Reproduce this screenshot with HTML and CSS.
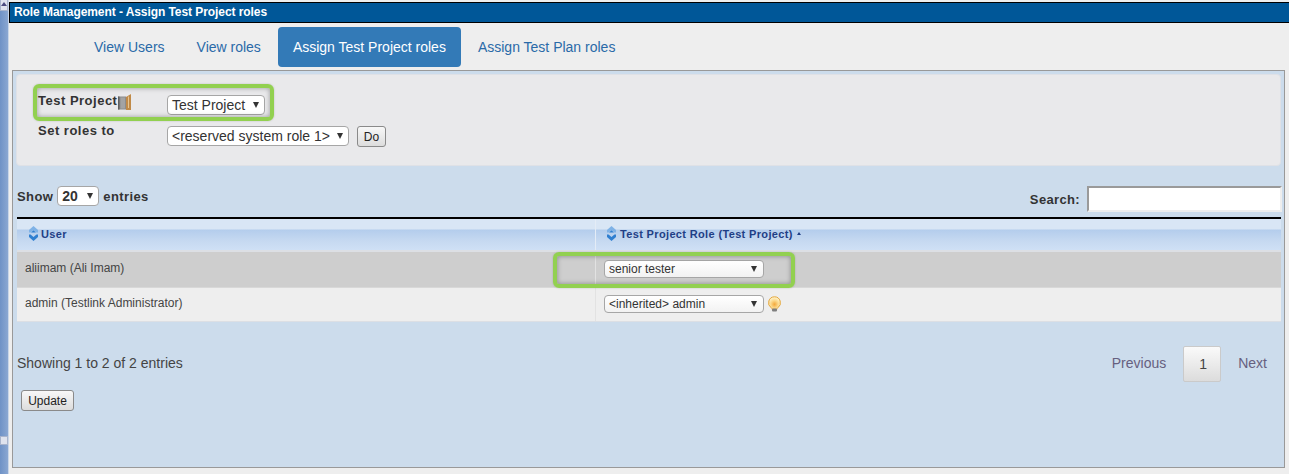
FILE: index.html
```html
<!DOCTYPE html>
<html lang="en">
<head>
<meta charset="utf-8">
<title>Assign Test Project roles</title>
<link rel="stylesheet" href="styles.css">
</head>
<body>
<div class="page">
  <aside class="rail">
    <div class="rail-btn rail-btn-top"><span class="rail-arrow"></span></div>
    <div class="rail-btn rail-btn-grip"></div>
  </aside>
  <main class="main">
    <h1 class="title">Role Management - Assign Test Project roles</h1>
    <nav class="tabs">
      <a class="tab">View Users</a>
      <a class="tab">View roles</a>
      <a class="tab tab-active">Assign Test Project roles</a>
      <a class="tab">Assign Test Plan roles</a>
    </nav>
    <section class="content">
      <div class="panel">
        <div class="form-row form-row-first">
          <span class="form-label">Test Project<svg class="door" width="14" height="16" viewBox="0 0 14 16"><rect x="1" y="2.5" width="8" height="13" fill="#8c8c8c"/><rect x="1" y="2.5" width="1.5" height="13" fill="#5f5f5f"/><rect x="3.5" y="3.5" width="4.5" height="11" fill="#a3a3a3"/><path d="M9 3 14 0v16H9z" fill="#c08a48"/><path d="M11.5 2.5V14" stroke="#e8c48e"/></svg></span>
          <span class="select select-project">Test Project</span>
        </div>
        <div class="form-row form-row-second">
          <span class="form-label form-label-plain">Set roles to</span>
          <span class="select select-role">&lt;reserved system role 1&gt;</span>
          <button class="btn btn-do">Do</button>
        </div>
        <div class="mark mark-project"></div>
      </div>
      <div class="table-tools">
        <div class="length">Show <span class="select select-length">20</span> entries</div>
        <div class="search">Search: <span class="search-input"></span></div>
      </div>
      <div class="table">
        <div class="thead">
          <div class="th th-user"><svg class="sort" width="9" height="15" viewBox="0 0 9 15"><path d="M4.5 0 9 4v2.5H7.5L4.5 4 1.5 6.500H0V4z" fill="#7fb2e6"/><path d="M4.5 15 0 11V8.500h1.500l3 2.500 3-2.500H9V11z" fill="#2f7fd0"/><path d="M4.500 4.200 7 6.500H2z" fill="#2f7fd0"/></svg>User</div>
          <div class="th th-role"><svg class="sort" width="9" height="15" viewBox="0 0 9 15"><path d="M4.5 0 9 4v2.5H7.5L4.5 4 1.5 6.500H0V4z" fill="#7fb2e6"/><path d="M4.5 15 0 11V8.500h1.500l3 2.500 3-2.500H9V11z" fill="#2f7fd0"/><path d="M4.500 4.200 7 6.500H2z" fill="#2f7fd0"/></svg>Test Project Role (Test Project)<span class="caret-up"></span></div>
        </div>
        <div class="tr tr-dark">
          <div class="td td-user">aliimam (Ali Imam)</div>
          <div class="td td-role"><span class="select select-cell">senior tester</span></div>
        </div>
        <div class="tr tr-light">
          <div class="td td-user">admin (Testlink Administrator)</div>
          <div class="td td-role"><span class="select select-cell">&lt;inherited&gt; admin</span><svg class="bulb" width="15" height="16" viewBox="0 0 15 16"><defs><radialGradient id="bulbGlow" cx=".5" cy=".6" r=".55"><stop offset="0" stop-color="#f3a83a"/><stop offset=".55" stop-color="#fbd88a"/><stop offset="1" stop-color="#fff2c8"/></radialGradient></defs><path d="M7.5.8a6 6 0 0 0-3.4 10.900c.7.500.9 1 .9 1.600h5c0-.6.2-1.100.9-1.600A6 6 0 0 0 7.500.8z" fill="url(#bulbGlow)" stroke="#e3a63c"/><rect x="5" y="12.500" width="5" height="3" rx="1" fill="#7f7f7f"/></svg></div>
        </div>
        <div class="mark mark-cell"></div>
      </div>
      <div class="table-foot">
        <div class="info">Showing 1 to 2 of 2 entries</div>
        <div class="pager">
          <span class="page-link">Previous</span>
          <span class="page-current">1</span>
          <span class="page-link">Next</span>
        </div>
      </div>
      <button class="btn btn-update">Update</button>
    </section>
  </main>
</div>
</body>
</html>
```
FILE: styles.css
```css
* { box-sizing: border-box; }
html, body { margin: 0; padding: 0; height: 100%; }
body { font-family: "Liberation Sans", Arial, sans-serif; background: #eeeeee; overflow: hidden; }
.page { display: flex; height: 474px; }

.rail { width: 9px; flex: none; background: linear-gradient(90deg, #6f92c6, #8aa7d2); border-right: 1px solid #c9d6e8; display: flex; flex-direction: column; justify-content: space-between; padding-bottom: 29px; }
.rail-btn { width: 8px; background: #dfe3ee; border: 1px solid #a9b4cc; }
.rail-btn-top { height: 11px; border-top: 0; display: flex; justify-content: center; padding-top: 2px; }
.rail-arrow { width: 0; height: 0; border-left: 3px solid transparent; border-right: 3px solid transparent; border-bottom: 4px solid #4b4b80; }
.rail-btn-grip { height: 9px; }

.main { flex: 1; min-width: 0; padding-top: 2px; }
.title { margin: 0; height: 21px; padding: 0 0 0 4px; background: #005798; border: 1px solid #000; border-right: 0; color: #fff; font-size: 12px; font-weight: bold; line-height: 18px; letter-spacing: -.07px; }

.tabs { display: flex; gap: 2px; height: 47px; padding: 4px 0 3px 70px; }
.tab { padding: 0 15px; height: 40px; line-height: 40px; font-size: 14px; color: #2a6aa8; border-radius: 4px; }
.tab-active { background: #337ab7; color: #fff; }

.content { margin: 0 4px 0 3px; height: 398px; background: #ccdcec; border: 1px solid #999; padding: 3px 3px 0 3px; }

.panel { position: relative; height: 92px; background: #e9e9eb; border: 1px solid #dfe1e6; border-radius: 4px; }
.form-row { display: flex; align-items: center; }
.form-row-first { padding: 20px 0 0 21px; }
.form-row-second { padding: 10px 0 0 21px; }
.form-label { width: 129px; font-size: 13px; font-weight: bold; color: #333; letter-spacing: .5px; display: flex; align-items: flex-start; height: 20px; margin-top: -5px; }
.form-label-plain { margin-top: -7px; }
.door { margin-top: 1px; }

.select { position: relative; display: inline-flex; align-items: center; height: 20px; padding: 0 0 0 4px; background: #fff; border: 1px solid #a6a6a6; border-radius: 4px; color: #333; font-size: 14px; }
.select::after { content: ""; position: absolute; right: 5px; top: 6px; border-left: 3.5px solid transparent; border-right: 3.5px solid transparent; border-top: 6px solid #333; }
.select-project { width: 98px; }
.select-role { width: 182px; }
.select-length { width: 42px; font-weight: bold; margin: 0 1px; letter-spacing: 0; }
.select-cell { width: 160px; height: 18px; font-size: 12px; padding-left: 4px; background: linear-gradient(#fff, #f2f2f2); }
.select-cell::after { top: 5px; right: 6px; }

.btn { font-family: inherit; font-size: 12px; color: #222; background: linear-gradient(#f8f8f8, #dcdcdc); border: 1px solid #8a8a8a; border-radius: 3px; padding: 0; }
.btn-do { width: 29px; height: 21px; margin: 1px 0 0 8px; }
.btn-update { display: block; width: 53px; height: 21px; margin: 9px 0 0 5px; }

.mark { position: absolute; border: 4px solid #92d050; border-radius: 6px; box-shadow: inset 0 0 5px rgba(0, 0, 0, .35), 0 0 2px rgba(0, 0, 0, .2); pointer-events: none; }
.mark-project { left: 16px; top: 9px; width: 241px; height: 37px; }
.mark-cell { left: 536px; top: 35px; width: 242px; height: 36px; }

.table-tools { display: flex; justify-content: space-between; align-items: flex-start; height: 51px; padding: 20px 0 0 1px; font-size: 13px; font-weight: bold; color: #333; }
.length { display: flex; align-items: center; gap: 3px; height: 20px; letter-spacing: .4px; }
.search { display: flex; align-items: center; gap: 7px; height: 26px; margin-right: -1px; letter-spacing: .35px; }
.search-input { width: 195px; height: 26px; background: #fff; border: 2px solid; border-color: #9a9a9a #eeeeee #eeeeee #9a9a9a; }

.table { position: relative; margin-left: 1px; }
.thead { display: flex; height: 35px; border-top: 2px solid #000; border-bottom: 2px solid #dcdfe4; background: linear-gradient(#d9e6f5 0, #d9e6f5 10px, #b4cdec 11px, #c6d9f1 22px, #cfe0f5 100%); }
.th { display: flex; align-items: flex-start; gap: 4px; padding-top: 9px; font-size: 11px; font-weight: bold; color: #1f3f86; letter-spacing: .35px; }
.th-user { width: 579px; padding-left: 12px; gap: 3px; border-right: 1px solid #e4ecf6; }
.th-role { flex: 1; padding-left: 11px; }
.sort { flex: none; margin-top: -2px; }
.caret-up { width: 0; height: 0; margin: 4px 0 0 0; border-left: 2.5px solid transparent; border-right: 2.5px solid transparent; border-bottom: 3px solid #1f3f86; }

.tr { display: flex; }
.tr-dark { height: 35px; background: #cecece; }
.tr-light { height: 35px; background: #eeeeee; border-bottom: 1px solid #dcdfe4; border-top: 1px solid #d8d8d8; }
.td { display: flex; align-items: center; font-size: 12px; color: #444; }
.td-user { width: 579px; padding: 0 0 3px 8px; border-right: 1px solid #e2e2e2; }
.td-role { flex: 1; padding: 0 0 2px 8px; }
.bulb { margin-left: 3px; }

.table-foot { display: flex; justify-content: space-between; height: 59px; padding: 24px 0 0 1px; font-size: 14px; color: #444; }
.info { padding-top: 9px; line-height: 16px; }
.pager { display: flex; align-items: flex-start; color: #666; }
.page-link { padding: 9px 14px 0; line-height: 16px; color: #66607f; }
.page-current { width: 38px; height: 36px; margin: 0 3px; padding-left: 2px; line-height: 34px; text-align: center; color: #444; background: linear-gradient(#fafafa, #dcdcdc); border: 1px solid #cacaca; border-radius: 2px; }
```
